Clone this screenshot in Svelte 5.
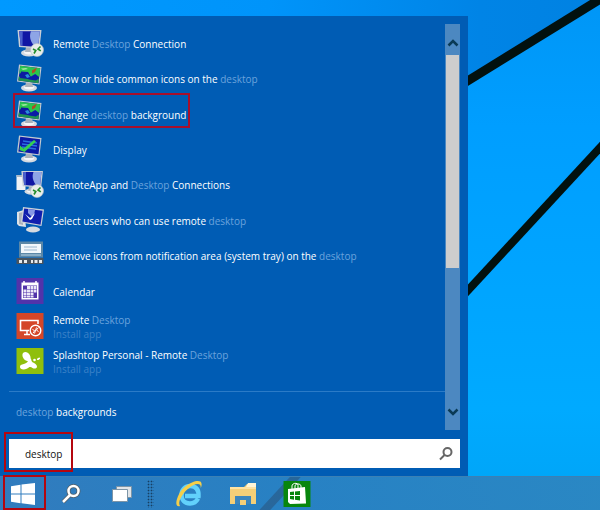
<script lang="ts">
  type Part = { text: string, match?: boolean }
  type Result = { icon: string, parts: Part[], note?: string, marked?: boolean }

  const results: Result[] = [
    { icon: 'remote', parts: [{ text: 'Remote ' }, { text: 'Desktop', match: true }, { text: ' Connection' }] },
    { icon: 'personalize', parts: [{ text: 'Show or hide common icons on the ' }, { text: 'desktop', match: true }] },
    { icon: 'personalize', parts: [{ text: 'Change ' }, { text: 'desktop', match: true }, { text: ' background' }], marked: true },
    { icon: 'display', parts: [{ text: 'Display' }] },
    { icon: 'remoteapp', parts: [{ text: 'RemoteApp and ' }, { text: 'Desktop', match: true }, { text: ' Connections' }] },
    { icon: 'users', parts: [{ text: 'Select users who can use remote ' }, { text: 'desktop', match: true }] },
    { icon: 'tray', parts: [{ text: 'Remove icons from notification area (system tray) on the ' }, { text: 'desktop', match: true }] },
    { icon: 'calendar', parts: [{ text: 'Calendar' }] },
    { icon: 'rdapp', parts: [{ text: 'Remote ' }, { text: 'Desktop', match: true }], note: 'Install app' },
    { icon: 'splashtop', parts: [{ text: 'Splashtop Personal - Remote ' }, { text: 'Desktop', match: true }], note: 'Install app' },
  ]

  let query = $state('desktop')
</script>

{#snippet monitor(kind: string)}
  <ellipse cx="13" cy="24" rx="8" ry="3.4" fill="#d5dae0" />
  <ellipse cx="13" cy="23.6" rx="5" ry="1.8" fill="#f5f6f8" />
  <path d="M10 18h6l1 5H9z" fill="#a9b2bc" />
  {#if kind === 'remote'}
    <path d="M1.5 1 25.5 1 23.5 19.5 3 18z" fill="#c8cfd8" />
    <path d="M3.2 2.2 23.8 2.2 22.2 18 4.6 16.8z" fill="#1017a4" />
    <path d="M15 2.2h8.8L22.2 18l-3-.2C14 13 13 7 15 2.2z" fill="#8ea5e6" />
    <path d="M3.2 2.2h3.5L6.5 16.9l-1.9-.1z" fill="#4a60cc" />
  {:else}
    <path d="M3 .5 25.5 3 23.5 20.5 1 17.5z" fill="#c3c9d0" />
    <path d="M4.2 1.8 24.2 4.2 22.5 19.2 2.4 16.5z" fill="#0b1aa6" />
    {#if kind === 'personalize'}
      <path d="M4.2 1.8 24.2 4.2 23.2 13l-4-3-5 3-3-5-7.9 1.5z" fill="#2bc44c" />
      <path d="m2.9 12.500 7 1 3 2 7 1 3-2-.4 4.700-20.100-2.700z" fill="#1f9450" />
      <path d="m5 7.500 7 .5 3 5-3 2-8-1z" fill="#0c1ba0" />
      <path d="m16 6.500 5-3-2 4.500-3 1.500z" fill="#b04a24" />
      <path d="m5 4.500 5-.5 2 1-5 1z" fill="#a3e8a1" />
      <path d="m9 11 3-1 2 3-3 1z" fill="#2a8ed8" />
    {:else if kind === 'display'}
      <path d="m7 6 14 2M6 9l15 2M6 12l14 2" stroke="#2a6ee0" stroke-width="1.6" />
      <path d="m4 10.500 3.500 3L18 5l2 1.500L8.500 17l-5-2z" fill="#35cf52" />
    {/if}
  {/if}
{/snippet}

{#snippet badge()}
  <circle cx="21" cy="21" r="6.5" fill="#e9ede9" stroke="#b4bdc4" stroke-width=".6" />
  <path d="m17 20 2.800 1.500L18 24.500M24.500 17.500 22 20l2.800 1.800" fill="none" stroke="#228b2c" stroke-width="1.6" />
{/snippet}

{#snippet resultIcon(name: string)}
  <svg class="icon" viewBox="0 0 28 28" aria-hidden="true">
    {#if name === 'remote'}
      {@render monitor('remote')}
      {@render badge()}
    {:else if name === 'personalize' || name === 'display'}
      {@render monitor(name)}
    {:else if name === 'remoteapp'}
      <path d="M.5 5h9v15h-9z" fill="#f0f2f5" />
      <path d="M.5 5h9v2h-9z" fill="#aab8c8" />
      <g transform="translate(4 0) scale(.9)">{@render monitor('remote')}</g>
      {@render badge()}
    {:else if name === 'users'}
      <path d="m1 6 7-2 2 17-7-1-2-2z" fill="#dde2e7" />
      <path d="m3 7 4-1v13l-4-1z" fill="#aab2bc" />
      <g transform="translate(4 0)">
        <ellipse cx="13" cy="23.5" rx="7" ry="3" fill="#d5dae0" />
        <path d="M3 1 24 3.5 21.5 20 1 16.5z" fill="#cbd2da" />
        <path d="M4.2 2.4 22.6 4.7 20.5 18.7 2.4 15.4z" fill="#101eae" />
        <path d="m8 3 7 1-1 5-2 2-4-4z" fill="#8798e5" />
        <path d="m5 8 5 4 5-5-3 6-2 1z" fill="#fff" />
      </g>
    {:else if name === 'tray'}
      <path d="M3 .5h24v16H3z" fill="#5b87a7" />
      <path d="M5 3h20v9H5z" fill="#f2f7fb" />
      <path d="M8 6h13M8 9h13" stroke="#9bb8d0" />
      <path d="M5 14h20" stroke="#b8d3e5" />
      <path d="M.5 17h27v6H.5z" fill="#49535d" />
      <path d="M3 19h3v3H3zM8 19h3v3H8zM15 19h2v3h-2zM18.5 19h3v3h-3zM23 19h3v3h-3z" fill="#e8eaec" />
    {:else if name === 'calendar'}
      <path d="M.5 1h27v26H.5z" fill="#5233aa" />
      <path d="M5.5 5.5h17v17h-17z" fill="#fff" />
      <path d="M7 8.5h14V21H7z" fill="#5233aa" />
      <path d="M11 9h3v3h-3zM14.5 9h3v3h-3zM18 9h2.5v3H18zM7.5 12.5h3v3h-3zM11 12.5h3v3h-3zM14.5 12.5h3v3h-3zM18 12.5h2.5v3H18zM7.5 16h3v2.5h-3zM11 16h3v2.5h-3zM14.5 16h3v2.5h-3zM7.5 19h3v1.5h-3zM11 19h3v1.5h-3zM14.5 19h3v1.5h-3z" fill="#ece8f8" />
      <path d="M8 4v3M20 4v3" stroke="#fff" stroke-width="1.5" />
    {:else if name === 'rdapp'}
      <path d="M.5 1h27v26H.5z" fill="#d44628" />
      <path d="M13 18.5H4.5V8.5H22V12" fill="none" stroke="#fff" stroke-width="1.6" />
      <path d="M8 22.5h6M11 19v3" stroke="#fff" stroke-width="1.5" />
      <circle cx="19.5" cy="18.5" r="5.3" fill="#d44628" stroke="#fff" stroke-width="1.4" />
      <path d="m16.500 17.500 2.200 1.200-1.700 2.500M22.500 15.500l-2.200 2.500 2.200 1.500M18.500 21.500l2-6" fill="none" stroke="#fff" />
    {:else}
      <path d="M.5 1h27v26H.5z" fill="#8fbf0c" />
      <ellipse cx="10.5" cy="9.5" rx="3.6" ry="5" fill="#fff" transform="rotate(-35 10.5 9.5)" />
      <path d="M12 12l3-.5c.2 1.500.5 2.700 1.500 3.700 2 1 4.500 2.300 4.500 4.300s-2.500 2.700-4.500 1.500c-1-.8-1.800-1.300-3-1-2 1.500-3.500 2.500-6 2.500-2.200 0-3.500-1-3.500-2.500 0-2.200 2.500-2.700 4.500-3.200 2.500-.6 4-2.500 3.500-4.800z" fill="#fff" />
      <circle cx="18.5" cy="13" r="1.3" fill="#fff" />
      <ellipse cx="22.5" cy="11.8" rx="1.7" ry="1" fill="#fff" transform="rotate(-25 22.5 11.8)" />
    {/if}
  </svg>
{/snippet}

<div class="desktop">
  <svg class="wallpaper" viewBox="0 0 600 510" preserveAspectRatio="xMidYMid slice" aria-hidden="true">
    <defs>
      <linearGradient id="sky" x1="0" y1="0" x2="1" y2="0">
        <stop offset="0" stop-color="#0099ff" />
        <stop offset=".45" stop-color="#0094fa" />
        <stop offset=".8" stop-color="#0084e6" />
        <stop offset="1" stop-color="#0082e2" />
      </linearGradient>
      <linearGradient id="glow" x1="0" y1="0" x2="0" y2="1">
        <stop offset="0" stop-color="#0096f6" />
        <stop offset=".25" stop-color="#009eff" />
        <stop offset=".8" stop-color="#00aaff" />
        <stop offset="1" stop-color="#00a4f5" />
      </linearGradient>
    </defs>
    <path d="M0 0h600v510H0z" fill="url(#sky)" />
    <path d="M600-1 440 97 0 367v143h600z" fill="url(#glow)" />
    <path d="M610-7 440 98" stroke="#02110f" stroke-width="9" />
    <path d="M608 139 250 526" stroke="#02110f" stroke-width="8" />
  </svg>

  <section class="panel">
    <div class="found">
      <div class="lists">
        <ul class="results">
          {#each results as result}
            <li class:marked={result.marked}>
              <button class="result">
                {@render resultIcon(result.icon)}
                <span class="label">
                  <span>{#each result.parts as part}<span class:match={part.match}>{part.text}</span>{/each}</span>
                  {#if result.note}<span class="note">{result.note}</span>{/if}
                </span>
              </button>
            </li>
          {/each}
        </ul>
        <button class="suggestion"><span class="match">desktop</span> backgrounds</button>
      </div>
      <div class="scrollbar">
        <button aria-label="Scroll up">
          <svg viewBox="0 0 12 8"><path d="m1.500 6.500 4.500-4.500 4.500 4.500" /></svg>
        </button>
        <div class="track"><div class="thumb"></div></div>
        <button aria-label="Scroll down">
          <svg viewBox="0 0 12 8"><path d="m1.500 1.500 4.500 4.500 4.500-4.500" /></svg>
        </button>
      </div>
    </div>

    <form class="search" onsubmit={(e) => e.preventDefault()}>
      <input type="text" aria-label="Search" bind:value={query}>
      <button aria-label="Search">
        <svg viewBox="0 0 14 14"><circle cx="8.5" cy="5" r="4" /><path d="M5.5 8 1 12.5" /></svg>
      </button>
    </form>
  </section>

  <nav class="taskbar">
    <button class="start" aria-label="Start">
      <svg width="24" height="22" viewBox="0 0 24 22"><path d="M0 3.200 9.500 1.800v8.700H0zM10.500 1.600 24 0v10.500H10.500zM0 11.500h9.500v8.700L0 18.800zM10.500 11.500H24V22l-13.500-1.700z" fill="#fff" /></svg>
    </button>
    <button class="tool" aria-label="Search">
      <svg width="20" height="20" viewBox="0 0 20 20"><g fill="none" stroke="#52606b" stroke-width="4"><circle cx="12.5" cy="7" r="5" /><path d="m9 11-7 7" /></g><g fill="none" stroke="#fff" stroke-width="2.5"><circle cx="12.5" cy="7" r="5" /><path d="m9 11-7 7" /></g></svg>
    </button>
    <button class="tool" aria-label="Task view">
      <svg width="20" height="16" viewBox="0 0 20 16"><path d="M4.5.5h15v11h-15z" fill="#e1e5e8" stroke="#7d95a7" /><path d="M.5 3.500h15v12H.5z" fill="#fff" stroke="#7d95a7" /></svg>
    </button>
    <span class="grip"></span>
    <button class="app" aria-label="Internet Explorer">
      <svg width="28" height="28" viewBox="0 0 28 28">
        <path d="M23 18.500C21.500 21.500 19 23.500 15 23.500c-5 0-8.500-3.500-8.500-8.500s3.500-9 9-9 8.500 4 8 10H10" fill="none" stroke="#62d1fb" stroke-width="4.5" />
        <path d="M5 26C1.500 27 .5 24 2 19 4 12 10 5 17 2.500 22 .5 26 .5 26.500 3.500c.3 1.500 0 3-.8 4.500.2-2.500-.5-4-3-4-5.500 0-13.500 7-17 14-1.600 3.300-2 6-.7 8z" fill="#f6cf49" />
      </svg>
    </button>
    <button class="app" aria-label="File Explorer">
      <svg width="28" height="24" viewBox="0 0 28 24">
        <path d="M1 5h14l3-3h9v20h-5v-7H6v7H1z" fill="#f4cf78" />
        <path d="M17 5l2-4h8v4z" fill="#fff5d7" />
        <path d="M1 5h26v2H1z" fill="#ffe3a2" />
        <path d="M6 14h16v8h-4v-1h-8v1H6z" fill="#3c86bd" />
        <path d="M11 18h6v5h-6z" fill="#f4cf78" />
      </svg>
    </button>
    <button class="app" aria-label="Store">
      <svg width="28" height="28" viewBox="0 0 28 28">
        <path d="M.5 1h27v26H.5z" fill="#08860e" />
        <path d="M9 9V6c0-3 6-4 6-.5V9M12 9V6c0-3 6-2.500 6 0v2" fill="none" stroke="#fff" />
        <path d="m5 9 17-2 1 16.500L7 24 5 22z" fill="#fff" />
        <path d="m7 12 4-.4V15H7zM12 11.500l5-.6V15h-5zM7 16h4v3.700L7 19zM12 16h5v4.500l-5-.7z" fill="#08860e" />
      </svg>
    </button>
  </nav>
</div>

<style>
  :global(body) {
    margin: 0;
  }

  .desktop {
    position: relative;
    display: flex;
    flex-direction: column;
    min-height: 100vh;
    box-sizing: border-box;
    padding-top: 16px;
    overflow: hidden;
    font: 10px/14px "Open Sans", "Noto Sans", sans-serif;
    color: #fff;
  }

  .wallpaper {
    position: absolute;
    inset: 0;
    width: 100%;
    height: 100%;
  }

  button {
    display: flex;
    align-items: center;
    margin: 0;
    padding: 0;
    border: 0;
    background: none;
    font: inherit;
    color: inherit;
    text-align: left;
  }

  .panel {
    position: relative;
    flex: 1;
    display: flex;
    flex-direction: column;
    gap: 9px;
    width: 78%;
    box-sizing: border-box;
    padding: 8px 8px 8px 9px;
    background: #005cb4;
  }

  .found {
    flex: 1;
    display: flex;
  }

  .lists {
    flex: 1;
    display: flex;
    flex-direction: column;
  }

  .results {
    flex: 1;
    display: flex;
    flex-direction: column;
    margin: 0;
    padding: 1px 0 12px 7px;
    list-style: none;
    border-bottom: 1px solid #2b7bc7;
  }

  li {
    position: relative;
    flex: 1;
    display: flex;
  }

  .marked::after {
    content: "";
    position: absolute;
    top: -3px;
    left: -3px;
    width: 173px;
    height: 31px;
    border: 2px solid #a80f2b;
    pointer-events: none;
  }

  .result {
    flex: 1;
    gap: 9px;
  }

  .icon {
    flex: none;
    width: 28px;
    height: 28px;
  }

  .label {
    display: flex;
    flex-direction: column;
    padding-top: 2px;
    white-space: pre;
  }

  .match {
    color: #6ba3dc;
  }

  .note {
    color: #3c82c8;
  }

  .suggestion {
    height: 38px;
    padding: 2px 0 0 7px;
    white-space: pre;
  }

  .scrollbar {
    display: flex;
    flex-direction: column;
    width: 15px;
    background: #4c88c1;
  }

  .scrollbar button {
    justify-content: center;
    height: 37px;
  }

  .scrollbar button:first-child {
    height: 31px;
    padding-top: 6px;
    box-sizing: border-box;
  }

  .scrollbar svg {
    width: 12px;
    height: 8px;
    fill: none;
    stroke: #0a3a55;
    stroke-width: 2.5;
  }

  .track {
    flex: 1;
    padding: 0 1px;
  }

  .thumb {
    height: 63%;
    background: #cdcdcd;
  }

  .search {
    position: relative;
    display: flex;
    height: 29px;
    background: #fff;
  }

  .search::after {
    content: "";
    position: absolute;
    top: -7px;
    left: -5px;
    width: 65px;
    height: 36px;
    border: 2px solid #b4060f;
    pointer-events: none;
  }

  .search input {
    flex: 1;
    min-width: 0;
    padding: 0 0 0 16px;
    border: 0;
    outline: 0;
    background: none;
    font: inherit;
    color: #111;
  }

  .search button {
    padding: 0 7px;
  }

  .search svg {
    width: 14px;
    height: 14px;
    fill: none;
    stroke: #666;
    stroke-width: 2;
  }

  .taskbar {
    position: relative;
    display: flex;
    align-items: center;
    height: 34px;
    background: linear-gradient(90deg, #3479baf0, #3079b8d0 50%, #3a7cb0b8);
    border-top: 1px solid #3b80b4;
    box-sizing: border-box;
  }

  .taskbar button {
    justify-content: center;
    height: 100%;
  }

  .taskbar .start {
    position: relative;
    width: 45px;
  }

  .start::after {
    content: "";
    position: absolute;
    top: -2px;
    left: 3px;
    width: 39px;
    height: 31px;
    border: 2px solid #b4060f;
  }

  .tool {
    width: 51px;
  }

  .app {
    width: 54px;
  }

  .grip {
    width: 7px;
    height: 28px;
    margin-right: 8px;
    background: radial-gradient(circle, #173f62 40%, transparent 50%) 0 0 / 3px 3px;
  }
</style>
